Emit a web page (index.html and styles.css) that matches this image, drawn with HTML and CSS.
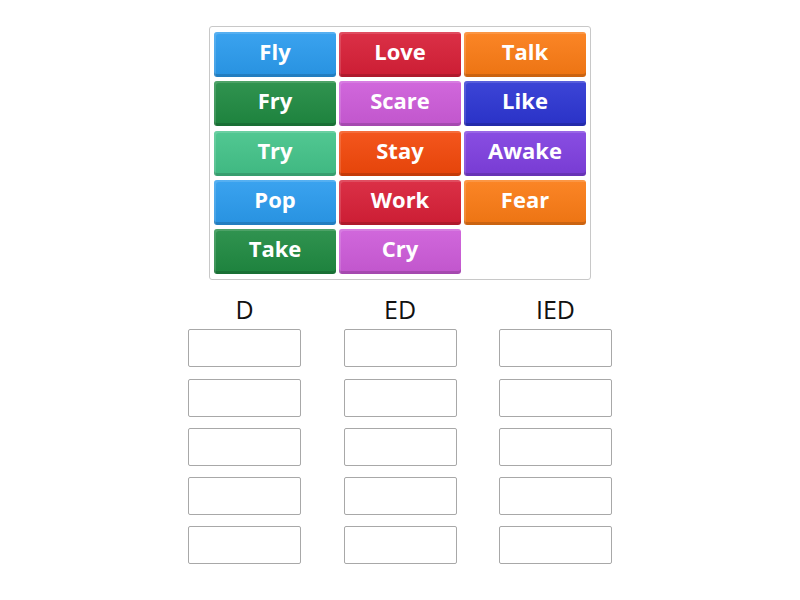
FILE: index.html
```html
<!DOCTYPE html>
<html>
<head>
<meta charset="utf-8">
<link rel="stylesheet" href="styles.css">
</head>
<body>
<div class="page">
  <div class="bank">
    <div class="tile blue">Fly</div>
    <div class="tile red">Love</div>
    <div class="tile orange">Talk</div>
    <div class="tile green">Fry</div>
    <div class="tile pink">Scare</div>
    <div class="tile royal">Like</div>
    <div class="tile mint">Try</div>
    <div class="tile flame">Stay</div>
    <div class="tile purple">Awake</div>
    <div class="tile blue">Pop</div>
    <div class="tile red">Work</div>
    <div class="tile orange">Fear</div>
    <div class="tile green">Take</div>
    <div class="tile pink">Cry</div>
  </div>
  <div class="groups">
    <div class="group">
      <div class="label">D</div>
      <div class="slot"></div><div class="slot"></div><div class="slot"></div><div class="slot"></div><div class="slot"></div>
    </div>
    <div class="group">
      <div class="label">ED</div>
      <div class="slot"></div><div class="slot"></div><div class="slot"></div><div class="slot"></div><div class="slot"></div>
    </div>
    <div class="group">
      <div class="label">IED</div>
      <div class="slot"></div><div class="slot"></div><div class="slot"></div><div class="slot"></div><div class="slot"></div>
    </div>
  </div>
</div>
</body>
</html>
```

FILE: styles.css
```css
html, body {
  margin: 0;
  padding: 0;
  background: #ffffff;
  font-family: "Open Sans", "Liberation Sans", sans-serif;
}
.page {
  display: flex;
  flex-direction: column;
  align-items: center;
  padding-top: 26px;
}
.bank {
  box-sizing: border-box;
  width: 382px;
  height: 254px;
  border: 1px solid #c8c8c8;
  border-radius: 3px;
  padding: 5px 4px 6px 4px;
  display: grid;
  grid-template-columns: repeat(3, 122px);
  grid-auto-rows: 45px;
  column-gap: 3px;
  row-gap: 4.25px;
}
.tile {
  border-radius: 3px;
  color: #ffffff;
  font-weight: 700;
  font-size: 22px;
  display: flex;
  align-items: center;
  justify-content: center;
  padding-bottom: 7px;
  box-sizing: border-box;
  background-image: linear-gradient(to bottom, rgba(255,255,255,0.08), rgba(0,0,0,0.06));
  box-shadow: inset 0 -3px 0 rgba(0,0,0,0.14), inset 2px 2px 0 rgba(255,255,255,0.14);
}
.blue { background-color: #2a9bee; }
.red { background-color: #d81f37; }
.orange { background-color: #fb7b14; }
.green { background-color: #1f8a41; }
.pink { background-color: #cd5bd9; }
.royal { background-color: #2c35d3; }
.mint { background-color: #43c389; }
.flame { background-color: #f3480a; }
.purple { background-color: #7f3fe0; }

.groups {
  margin-top: 14px;
  display: grid;
  grid-template-columns: repeat(3, 113px);
  column-gap: 42.5px;
}
.group {
  display: flex;
  flex-direction: column;
  row-gap: 11.25px;
}
.label {
  text-align: center;
  font-size: 25px;
  line-height: 30px;
  color: #111111;
  margin-bottom: -6px;
}
.slot {
  box-sizing: border-box;
  height: 38px;
  border: 1px solid #a8a8a8;
  border-radius: 2px;
  background: #ffffff;
}
```
